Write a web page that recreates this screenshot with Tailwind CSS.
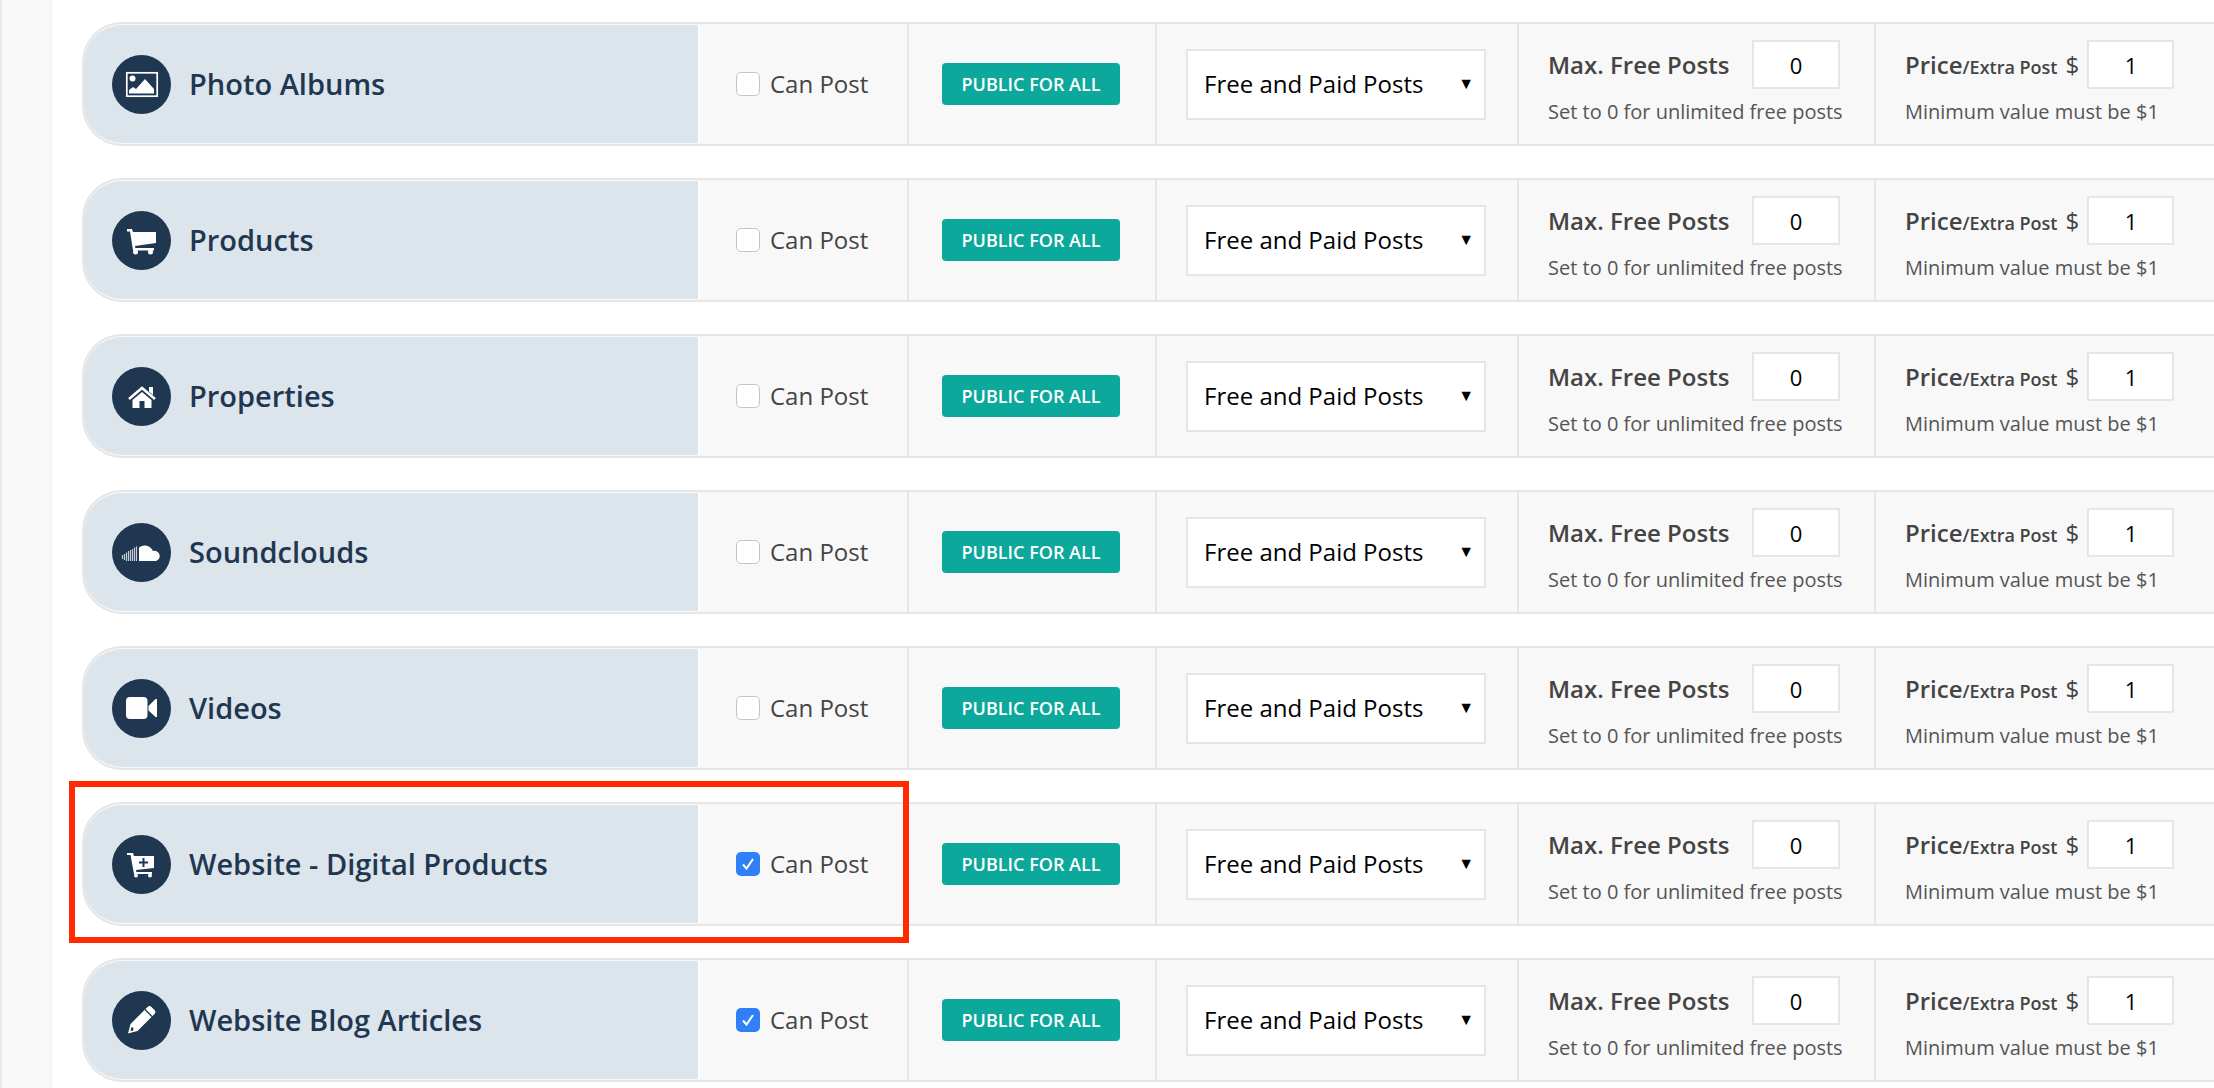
<!DOCTYPE html>
<html lang="en">
<head>
    <meta charset="UTF-8">
    <title>Listing Types</title>
    <script src="https://cdn.jsdelivr.net/npm/@tailwindcss/browser@4"></script>
</head>
<body class="bg-white overflow-hidden font-['Open_Sans',sans-serif]">
<div class="relative flex w-[2214px] h-[1088px] overflow-hidden">
    <div class="w-[52px] shrink-0 bg-[#f8f8f8] border-l-2 border-[#e6eaf0] border-r border-r-[#f1f1f1]"></div>
    <div id="rows" class="flex flex-col gap-[32px] pl-[30px] pt-[22px] w-[2162px] shrink-0"></div>
    <!-- annotation box over row 6 -->
    <div class="absolute left-[69px] top-[781px] w-[840px] h-[162px] border-[6px] border-[#ff2a00] pointer-events-none"></div>
</div>

<script>
    const icons = {
        photo: '<rect x="14.8" y="17.8" width="30.4" height="23.4" fill="none" stroke="#fff" stroke-width="1.7"/><circle cx="20.5" cy="23.5" r="3" fill="#fff"/><path d="M17 38.5V35l4-3 3 2 9-10 9 10v4.500z" fill="#fff"/>',
        cart: '<path d="M15 18h5l1 3h23v11l-21 3 .4 2H42v2.500H21L18 20.500h-3z" fill="#fff"/><circle cx="23.500" cy="41" r="2.500" fill="#fff"/><circle cx="38.500" cy="41" r="2.500" fill="#fff"/>',
        home: '<path d="M17 32l13-11 13 11" fill="none" stroke="#fff" stroke-width="2.600"/><path d="M37 20h4v8l-4-3.500z" fill="#fff"/><path d="M20.500 33L30 25l9.500 8v8h-7v-7h-5v7h-7z" fill="#fff"/>',
        cloud: '<path d="M27 38V24.500a9 9 0 0 1 14 3.500 5.200 5.200 0 1 1 3 10z" fill="#fff"/><path d="M10.500 32v4M12.500 31v6M14.500 29.500v8.500M16.500 28v10M18.500 27v11M20.500 26v12M22.500 24.500v13.500M24.500 23.500v14.500" stroke="#fff" stroke-width="1.200" opacity=".75"/>',
        video: '<rect x="14" y="18" width="21.500" height="22" rx="4" fill="#fff"/><path d="M36.500 27l7-7h1.500v18h-1.500l-7-6.500z" fill="#fff"/>',
        cartplus: '<path fill-rule="evenodd" d="M15 18h6l1 3h20v12l-18 2 .4 2H40v2H22L18.500 20h-3.500zM30.500 23v3.500H27v2h3.500V32h2v-3.500H36v-2h-3.500V23z" fill="#fff"/><circle cx="24" cy="40.500" r="2" fill="#fff"/><circle cx="38" cy="40.500" r="2" fill="#fff"/>',
        pencil: '<path fill-rule="evenodd" d="M16 42.500l2.500-9.500 17-17a3 3 0 0 1 4 0l3 3a3 3 0 0 1 0 4l-17 17zM19.500 36l-1 3.500 2.500 .5 .5-3z" fill="#fff"/><path d="M33 18.500l7 7" stroke="#1f3750" stroke-width="1.200"/>'
    };

    const rows = [
        ['Photo Albums', icons.photo, false],
        ['Products', icons.cart, false],
        ['Properties', icons.home, false],
        ['Soundclouds', icons.cloud, false],
        ['Videos', icons.video, false],
        ['Website - Digital Products', icons.cartplus, true],
        ['Website Blog Articles', icons.pencil, true]
    ];

    const box = (checked) => checked
        ? '<span class="w-[24px] h-[24px] rounded-[5px] bg-[#2f80f6] flex items-center justify-center"><svg width="16" height="16" viewBox="0 0 16 16"><path d="M3 8.500l3.500 4L13 3" fill="none" stroke="#fff" stroke-width="2"/></svg></span>'
        : '<span class="w-[24px] h-[24px] rounded-[5px] bg-white border-[1.500px] border-[#c4c4c4]"></span>';

    document.getElementById('rows').innerHTML = rows.map(([title, icon, checked]) => `
        <div class="flex h-[124px] w-full shrink-0 border-y-2 border-l-2 border-[#e6e6e6] rounded-l-[40px] bg-[#f8f8f8]">
            <div class="w-[616px] shrink-0 flex items-center gap-[18px] pl-[28px] my-px bg-[#dce4ec] rounded-l-[38px] border-r-2 border-white">
                <svg class="w-[59px] h-[59px] shrink-0" viewBox="0 0 59 59"><circle cx="29.500" cy="29.500" r="29.500" fill="#1f3750"/>${icon}</svg>
                <span class="text-[29px] font-semibold text-[#1f3750]">${title}</span>
            </div>
            <div class="w-[207px] shrink-0 flex items-center gap-[10px] pl-[36px] text-[24px] text-[#444]">
                ${box(checked)}<span>Can Post</span>
            </div>
            <div class="w-[248px] shrink-0 flex items-center pl-[33px] border-l-2 border-[#e6e6e6]">
                <span class="w-[178px] h-[42px] flex items-center justify-center rounded-[4px] bg-[#0ba89b] text-white text-[18px] font-semibold">PUBLIC FOR ALL</span>
            </div>
            <div class="w-[362px] shrink-0 flex items-center pl-[29px] border-l-2 border-[#e6e6e6]">
                <div class="relative w-[300px] h-[71px]">
                    <select class="appearance-none w-full h-full pl-[16px] bg-white border-2 border-[#e6e6e6] text-[24px] text-black outline-none"><option>Free and Paid Posts</option></select>
                    <span class="absolute right-[12px] top-[22px] text-[16px] text-black">▼</span>
                </div>
            </div>
            <div class="w-[357px] shrink-0 pl-[29px] pt-[16px] border-l-2 border-[#e6e6e6]">
                <div class="flex items-center gap-[8px] text-[#444]">
                    <span class="text-[24px] font-semibold w-[196px] whitespace-nowrap">Max. Free Posts</span>
                    <input value="0" class="w-[88px] h-[49px] bg-white border-2 border-[#e6e6e6] text-center text-[22px] text-black outline-none">
                </div>
                <p class="mt-[8px] text-[20px] text-[#555] whitespace-nowrap">Set to 0 for unlimited free posts</p>
            </div>
            <div class="flex-1 pl-[29px] pt-[16px] border-l-2 border-[#e6e6e6]">
                <div class="flex items-center text-[#444]">
                    <span class="text-[24px] font-semibold whitespace-nowrap">Price<span class="text-[18px]">/Extra Post</span></span>
                    <span class="ml-[8px] text-[24px] w-[22px]">$</span>
                    <input value="1" class="w-[87px] h-[49px] bg-white border-2 border-[#e6e6e6] text-center text-[22px] text-black outline-none">
                </div>
                <p class="mt-[8px] text-[20px] text-[#555] whitespace-nowrap">Minimum value must be $1</p>
            </div>
        </div>`).join('');
</script>
</body>
</html>
